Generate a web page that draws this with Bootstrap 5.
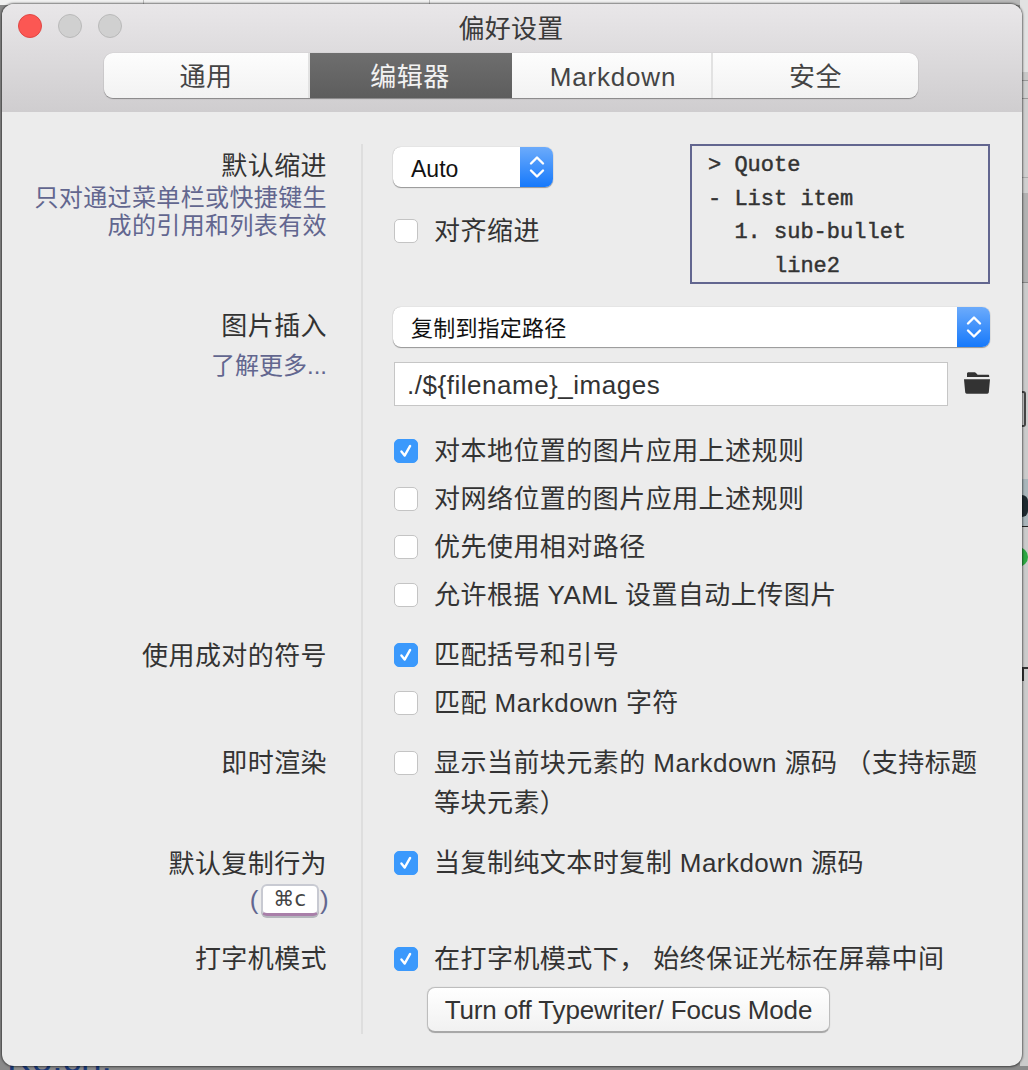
<!DOCTYPE html>
<html lang="zh">
<head>
<meta charset="utf-8">
<title>偏好设置</title>
<link href="https://cdn.jsdelivr.net/npm/bootstrap@5.3.0/dist/css/bootstrap.min.css" rel="stylesheet">
<style>
html,body{height:100%;margin:0}
body{background:#8a8a8a;overflow:hidden;font-family:"Liberation Sans","Noto Sans CJK SC",sans-serif;color:#333;position:relative;width:1028px;height:1070px}
.scr-top{position:absolute;left:0;top:0;width:1028px;height:5px;background:linear-gradient(90deg,#f1f1f1 0,#f1f1f1 143px,#bbb 143px,#bbb 144px,#f1f1f1 144px,#f1f1f1 429px,#bbb 429px,#bbb 430px,#f1f1f1 430px,#f1f1f1 900px,#b9b9b9 900px)}
.scr-right{position:absolute;left:1020px;top:0;width:8px;height:1066px;background:linear-gradient(180deg,#e2e2e2 0,#e2e2e2 72px,#c8c8c8 72px,#c8c8c8 80px,#999 80px,#999 81px,#cfcfcf 81px,#cfcfcf 98px,#999 98px,#999 99px,#cfcfcf 99px,#cfcfcf 177px,#aaa 177px,#aaa 178px,#cfcfcf 178px,#cfcfcf 193px,#b2b2b2 193px,#b2b2b2 282px,#888 282px,#888 283px,#cbcbcb 283px,#cbcbcb 479px,#a9b6bb 479px,#a9b6bb 526px,#222 526px,#222 527px,#cbcbcb 527px)}
.scr-brk{position:absolute;left:1022px;top:391px;width:4px;height:36px;border:2px solid #444;border-left:0;border-radius:0 3px 3px 0}
.scr-blob{position:absolute;left:1018px;top:495px;width:10px;height:22px;background:#1e2a30;border-radius:0 6px 6px 0}
.scr-dot{position:absolute;left:1008px;top:547px;width:20px;height:20px;border-radius:50%;background:#2ea843}
.scr-stem{position:absolute;left:1022px;top:667px;width:6px;height:14px;border:solid #333;border-width:2px 0 0 2px}
.scr-low{position:absolute;left:7px;top:1041px;font:400 37px/1 "Liberation Sans",sans-serif;color:#1b3a78}
.pref-win{position:absolute;left:2px;top:4px;width:1020px;height:1062px;background:#ececec;border-radius:12px;box-shadow:0 0 2px 1px rgba(0,0,0,.5);overflow:hidden;display:flex;flex-direction:column}
.pref-head{height:108px;flex:none;background:linear-gradient(180deg,#e9e7e9,#cfcdcf);position:relative}
.lights{position:absolute;left:16px;top:10px;gap:16px}
.light{width:24px;height:24px;border-radius:50%;background:#d0d0d0;border:1px solid #b9b9b9}
.light-red{background:#fc5753;border-color:#df4744}
.pref-title{position:absolute;left:0;right:0;top:6px;padding-right:2px;text-align:center;font-size:26px;line-height:34px;letter-spacing:.3px;color:#3a3a3a;font-family:"Noto Sans CJK SC",sans-serif}
.tabbar{position:absolute;left:102px;top:49px;width:814px;height:45px;display:flex;border-radius:9px;background:linear-gradient(180deg,#fdfdfd,#f2f2f2);box-shadow:0 1px 1px rgba(0,0,0,.35),0 0 1px rgba(0,0,0,.25)}
.tabitem{display:flex;align-items:center;justify-content:center;padding-top:3px;font-size:26px;letter-spacing:.45px;color:#444;border-right:2px solid #e2e2e2}
.tabitem:last-child{border-right:0}
.tab-a{width:206px}
.tab-b{width:202px;padding-right:2px}
.tab-c{width:201px;letter-spacing:.8px;padding-left:3px}
.tab-d{width:205px}
.tabitem.on{background:linear-gradient(180deg,#6e6e6e,#5d5d5d);color:#f2f2f2;border-right:0}
.pref-body{flex:1;padding-top:32px}
.pref-row{display:flex}
.pane-l{width:325px;flex:none;text-align:right;font-size:26px;letter-spacing:.42px;color:#333}
.pane-r{margin-left:34px;width:629px;flex:none;border-left:2px solid #dedede;padding-left:31px}
.pane-in{width:597px}
.r1 .pane-l{padding-top:4px;height:152px}
.r1 .pane-r{padding-top:3px;height:152px}
.r2 .pane-l{padding-top:12px}
.r2 .pane-r{padding-top:11px}
.r3 .pane-l{padding-top:13px}
.r3 .pane-r{padding-top:12px}
.r4 .pane-l,.r4 .pane-r{padding-top:16px}
.r5 .pane-l{padding-top:21px;height:96px}
.r5 .pane-r{padding-top:20px;height:96px}
.r6 .pane-l,.r6 .pane-r{padding-top:16px;height:115px}
.lh36{line-height:36px}.lh40{line-height:40px}.lh48{line-height:48px}
.hint{font-size:24px;line-height:28px;letter-spacing:.38px;color:#62668f}
.hint-more{margin-top:8px;display:block;text-decoration:none;letter-spacing:0}
.mac-sel{height:40px;margin-left:-1px;background:#fff;border-radius:8px;box-shadow:0 1px 1px rgba(0,0,0,.35),0 0 1px rgba(0,0,0,.3);display:flex;align-items:center;justify-content:space-between;padding-left:18px;color:#111;overflow:hidden}
.sel-auto{width:160px;font-size:23px;padding-top:4px}
.sel-path{width:597px;font-size:22px;letter-spacing:.2px;padding-top:2px}
.stepper{width:33px;height:40px;background:linear-gradient(180deg,#6cabfb,#1679fb);display:flex;align-items:center;justify-content:center;flex:none}
.sel-auto .stepper{margin-top:-4px}
.sel-path .stepper{margin-top:-2px}
.sample-box{width:300px;height:140px;margin-top:-3px;border:2px solid #62668f;margin-right:1px;padding:3px 0 0 16px;font:400 22px/33.7px "Liberation Mono",monospace;-webkit-text-stroke:.45px #333;color:#333;white-space:pre}
.chk-row{display:flex;align-items:flex-start;gap:16px;height:48px;line-height:48px;font-size:26px;letter-spacing:.46px;color:#333;margin:0}
.chk-row .form-check-input{width:24px;height:24px;margin:12px 0 0;flex:none;border:1px solid #c4c4c4;border-radius:5px;background-color:#fff;box-shadow:none}
.chk-row .form-check-input:checked{background-color:#3b99fc;border-color:#3b99fc;background-size:100% 100%;background-image:url("data:image/svg+xml,%3csvg xmlns='http://www.w3.org/2000/svg' viewBox='0 0 24 24'%3e%3cpath fill='none' stroke='%23fff' stroke-width='2.6' stroke-linecap='round' stroke-linejoin='round' d='M7 12.500 10.500 17 16.500 6.500'/%3e%3c/svg%3e")}
.chk-two{height:80px;line-height:40px}
.chk-two .form-check-input{margin-top:8px}
.chk-one{height:40px;line-height:40px}
.chk-one .form-check-input{margin-top:8px}
.chk-top{margin-top:20px}
.path-field{width:554px;height:44px;border:1px solid #c6c6c6;border-radius:0;padding:2px 12px 0;font-size:26px;letter-spacing:.52px;color:#333;background:#fff;box-shadow:none}
.path-line{display:flex;align-items:center;justify-content:space-between;margin:15px 1px 21px 0}
.folder-ic{width:26px;height:22px;margin-top:-2px;display:block}
.key-line{display:flex;justify-content:flex-end;align-items:center;color:#62668f;height:34px;margin:-1px -2px 0 0}
.key-cap{width:58px;height:32px;margin:0 1px 0 2px;background:#fff;border:2px solid #c8cad2;border-bottom:3px solid #a97fa9;border-radius:6px;box-shadow:0 2px 0 #b4b6bc;display:flex;align-items:center;justify-content:center;font:21px/1 "DejaVu Sans",sans-serif;color:#444}
.tw-btn{margin:4px 0 1px 33px;width:403px;height:46px;padding:1px 0 0;background:linear-gradient(180deg,#fff,#f1f1f1);border:1px solid #bdbdbd;border-bottom:2px solid #a8a8a8;border-radius:8px;font-size:26px;letter-spacing:-.16px;color:#333;box-shadow:0 0 1px rgba(0,0,0,.2)}
.tw-btn:hover{background:#fff;color:#333;border-color:#bdbdbd}
</style>
</head>
<body>
<div class="scr-top"></div><div class="scr-right"></div><div class="scr-brk"></div><div class="scr-blob"></div><div class="scr-dot"></div><div class="scr-stem"></div><div class="scr-low">Ko.cn:</div>
<div class="pref-win">
  <div class="pref-head">
    <div class="lights d-flex"><span class="light light-red"></span><span class="light"></span><span class="light"></span></div>
    <div class="pref-title">偏好设置</div>
    <div class="tabbar">
      <div class="tabitem tab-a">通用</div>
      <div class="tabitem tab-b on">编辑器</div>
      <div class="tabitem tab-c">Markdown</div>
      <div class="tabitem tab-d">安全</div>
    </div>
  </div>
  <div class="pref-body">
    <div class="pref-row r1">
      <div class="pane-l">
        <div class="lh36">默认缩进</div>
        <div class="hint">只对通过菜单栏或快捷键生<br>成的引用和列表有效</div>
      </div>
      <div class="pane-r">
        <div class="pane-in d-flex justify-content-between align-items-start">
          <div>
            <div class="mac-sel sel-auto"><span>Auto</span>
              <span class="stepper"><svg width="18" height="26" viewBox="0 0 18 26" fill="none" stroke="#fff" stroke-width="2.4" stroke-linecap="round" stroke-linejoin="round"><path d="M3 9.5 9 3.5 15 9.5M3 16.5 9 22.5 15 16.5"/></svg></span>
            </div>
            <label class="chk-row chk-top"><input class="form-check-input" type="checkbox">对齐缩进</label>
          </div>
          <div class="sample-box">&gt; Quote
- List item
  1. sub-bullet
     line2</div>
        </div>
      </div>
    </div>
    <div class="pref-row r2">
      <div class="pane-l">
        <div class="lh36">图片插入</div>
        <a class="hint hint-more" href="#">了解更多...</a>
      </div>
      <div class="pane-r">
        <div class="pane-in">
          <div class="mac-sel sel-path"><span>复制到指定路径</span>
            <span class="stepper"><svg width="18" height="26" viewBox="0 0 18 26" fill="none" stroke="#fff" stroke-width="2.4" stroke-linecap="round" stroke-linejoin="round"><path d="M3 9.5 9 3.5 15 9.5M3 16.5 9 22.5 15 16.5"/></svg></span>
          </div>
          <div class="path-line">
            <input class="form-control path-field" type="text" value="./${filename}_images">
            <svg class="folder-ic" viewBox="0 0 26 22" fill="#333"><path d="M3 1.6C3 .8 3.7 .2 4.500 .2H10C11 .2 11.800 .7 12.500 1.500L13.600 2.800H24C24.800 2.800 25.200 3.300 25.200 4V5H3Z"/><path d="M.3 7.200H25.700C25.900 7.200 26 7.400 26 7.600L24.800 20.300C24.700 21.200 24.100 21.700 23.300 21.700H2.700C1.900 21.700 1.300 21.200 1.200 20.300L0 7.600C0 7.400 .1 7.200 .3 7.200Z"/></svg>
          </div>
          <label class="chk-row"><input class="form-check-input" type="checkbox" checked>对本地位置的图片应用上述规则</label>
          <label class="chk-row"><input class="form-check-input" type="checkbox">对网络位置的图片应用上述规则</label>
          <label class="chk-row"><input class="form-check-input" type="checkbox">优先使用相对路径</label>
          <label class="chk-row"><input class="form-check-input" type="checkbox">允许根据 YAML 设置自动上传图片</label>
        </div>
      </div>
    </div>
    <div class="pref-row r3">
      <div class="pane-l lh48">使用成对的符号</div>
      <div class="pane-r">
        <label class="chk-row"><input class="form-check-input" type="checkbox" checked>匹配括号和引号</label>
        <label class="chk-row"><input class="form-check-input" type="checkbox">匹配 Markdown 字符</label>
      </div>
    </div>
    <div class="pref-row r4">
      <div class="pane-l lh40">即时渲染</div>
      <div class="pane-r">
        <label class="chk-row chk-two pane-in"><input class="form-check-input" type="checkbox"><span>显示当前块元素的 Markdown 源码 （支持标题等块元素）</span></label>
      </div>
    </div>
    <div class="pref-row r5">
      <div class="pane-l">
        <div class="lh40">默认复制行为</div>
        <div class="key-line">(<span class="key-cap">⌘c</span>)</div>
      </div>
      <div class="pane-r">
        <label class="chk-row chk-one"><input class="form-check-input" type="checkbox" checked>当复制纯文本时复制 Markdown 源码</label>
      </div>
    </div>
    <div class="pref-row r6">
      <div class="pane-l lh48">打字机模式</div>
      <div class="pane-r">
        <label class="chk-row"><input class="form-check-input" type="checkbox" checked>在打字机模式下， 始终保证光标在屏幕中间</label>
        <button class="btn tw-btn" type="button">Turn off Typewriter/ Focus Mode</button>
      </div>
    </div>
  </div>
</div>
<script src="https://cdn.jsdelivr.net/npm/bootstrap@5.3.0/dist/js/bootstrap.bundle.min.js"></script>
</body>
</html>
